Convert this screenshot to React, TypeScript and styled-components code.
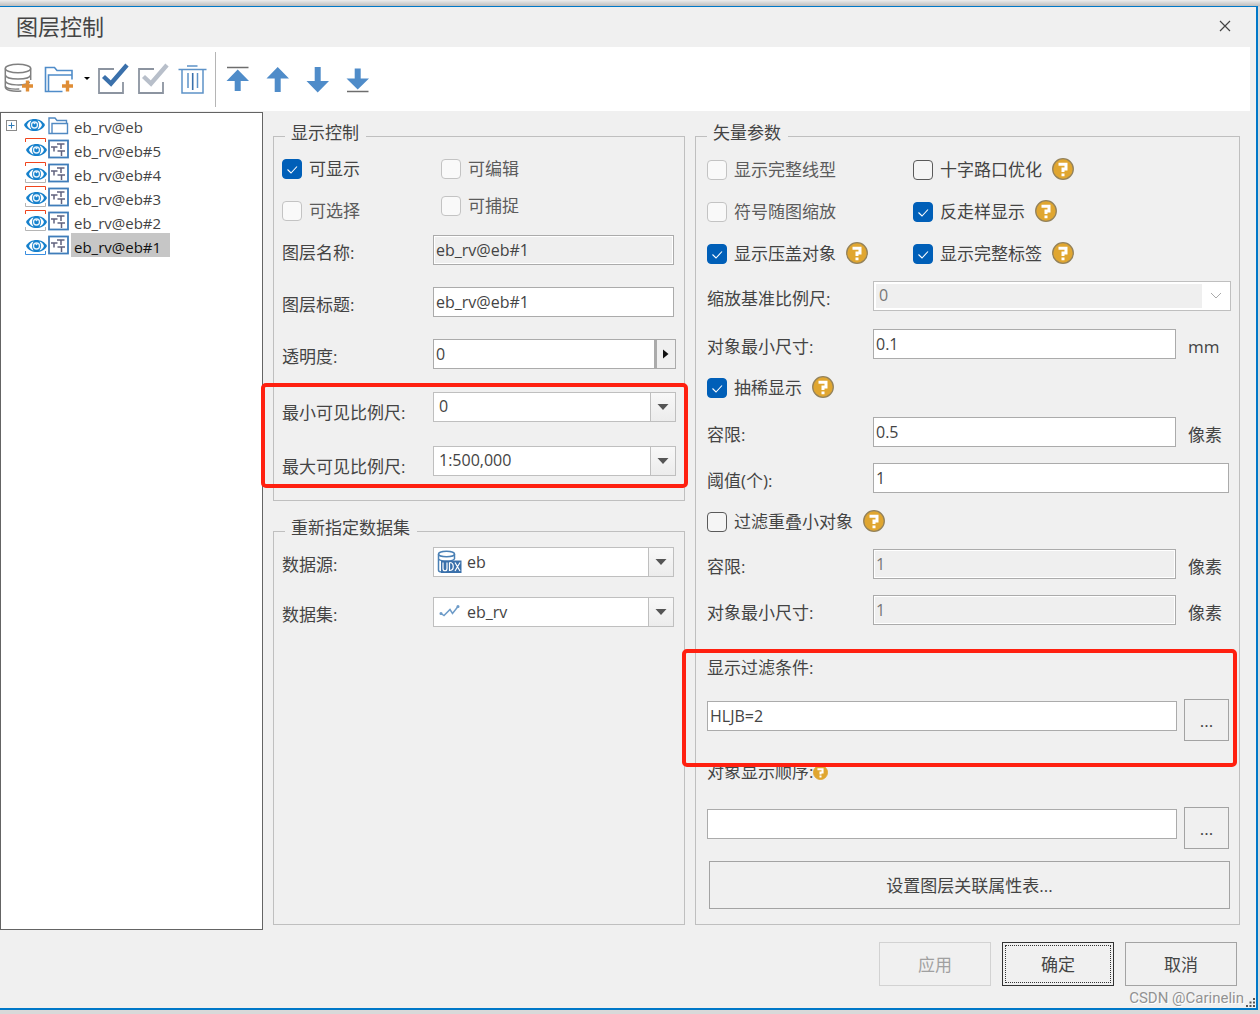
import React, { useId } from "react";
import styled, { createGlobalStyle, css } from "styled-components";

const line = "#bfbfbf";
const fieldLine = "#ababab";
const ink = "#444444";
const accent = "#0078c8";

const GlobalStyle = createGlobalStyle`
  * { box-sizing: border-box; }
  body {
    margin: 0;
    background: #d9d9d9;
    color: ${ink};
    font: 17px/22px "Open Sans", "Noto Sans CJK SC", sans-serif;
  }
  button, input, select { font: inherit; color: inherit; margin: 0; }
`;

/* ---------- window frame ---------- */

const Desktop = styled.div`
  display: flex;
  min-height: 100vh;
  padding: 6px 2px 4px 0;
  background: linear-gradient(#ededed, #bdbdbd 6px, #d9d9d9 7px);
`;

const Dialog = styled.main`
  display: flex;
  flex: 1;
  flex-direction: column;
  min-width: 0;
  border: solid ${accent};
  border-width: 1px 2px 2px 0;
  background: #f0f0f0;
`;

const TitleBar = styled.header`
  display: flex;
  align-items: center;
  justify-content: space-between;
  height: 40px;
  padding: 0 24px 2px 16px;
`;

const Title = styled.h1`
  margin: 0;
  font-size: 22px;
  font-weight: 400;
  line-height: 32px;
`;

const BareButton = styled.button`
  display: flex;
  align-items: center;
  justify-content: center;
  padding: 0;
  border: 0;
  background: none;
`;

const Toolbar = styled.div`
  display: flex;
  align-items: center;
  height: 64px;
  margin-right: 6px;
  background: #fff;
`;

const ToolButton = styled(BareButton)<{ $narrow?: boolean }>`
  width: ${(p) => (p.$narrow ? 13 : 40)}px;
  height: 40px;
`;

const Separator = styled.span`
  width: 1px;
  height: 55px;
  margin: 0 2px;
  background: #b5b5b5;
`;

const Body = styled.div`
  display: grid;
  flex: 1;
  grid-template-columns: 263px minmax(0, 412fr) minmax(0, 545fr);
  column-gap: 10px;
  padding: 1px 16px 0 0;
`;

const Column = styled.div`
  display: flex;
  flex-direction: column;
  gap: 15px;
  padding: 9px 0 5px;
`;

/* ---------- layer tree ---------- */

const Tree = styled.ul`
  margin: 0;
  padding: 0;
  border: 1px solid #646464;
  background: #fff;
  list-style: none;
  font-size: 15px;
`;

const TreeItem = styled.li`
  display: flex;
  align-items: center;
  height: 24px;
`;

const Indent = styled.span`
  width: 22px;
`;

const Expander = styled(BareButton)`
  width: 22px;
  height: 24px;
  padding-right: 2px;
`;

const TreeName = styled.span<{ $selected?: boolean }>`
  height: 24px;
  padding: 0 9px 0 3px;
  line-height: 28px;
  ${(p) => p.$selected && css`background: #c6c6c6; color: #111;`}
`;

/* ---------- groups and rows ---------- */

const Group = styled.fieldset<{ $grow?: boolean; $left: number }>`
  min-width: 0;
  margin: 0;
  padding: 0 8px 0 ${(p) => p.$left}px;
  border: 1px solid ${line};
  ${(p) => p.$grow && css`flex: 1;`}
`;

const Legend = styled.legend<{ $shift?: boolean }>`
  padding: 1px 7px 7px 6px;
  margin-left: ${(p) => (p.$shift ? 0 : 3)}px;
`;

const Stack = styled.div<{ $gap: number; $top?: number; $bottom?: number }>`
  position: relative;
  display: flex;
  flex-direction: column;
  gap: ${(p) => p.$gap}px;
  padding-top: ${(p) => p.$top ?? 0}px;
  padding-bottom: ${(p) => p.$bottom ?? 0}px;
`;

const Row = styled.div<{ $label?: number; $inset?: boolean; $space?: number }>`
  display: grid;
  grid-template-columns: ${(p) => p.$label ?? 151}px minmax(0, 1fr);
  grid-template-rows: 30px;
  margin-top: ${(p) => p.$space ?? 0}px;
  padding-right: ${(p) => (p.$inset ? 2 : 0)}px;
`;

const RowLabel = styled.label<{ $low?: boolean }>`
  padding-top: ${(p) => (p.$low ? 10 : 7)}px;
`;

const Inline = styled.div`
  display: flex;
`;

const Unit = styled.span`
  width: 53px;
  padding: 7px 0 0 12px;
`;

const CheckGrid = styled.div<{ $first: number }>`
  display: grid;
  grid-template-columns: ${(p) => p.$first}px minmax(0, 1fr);
  padding-top: 8px;
`;

/* ---------- controls ---------- */

const TextInput = styled.input`
  flex: 1;
  width: 100%;
  min-width: 0;
  height: 30px;
  padding: 0 2px;
  border: 1px solid ${fieldLine};
  background: #fff;
  font-size: 16px;

  &:read-only,
  &:disabled {
    background: #efefef;
    box-shadow: inset 0 0 0 1px #fff;
  }
  &:disabled { color: #777; }
`;

const SpinButton = styled(BareButton)`
  width: 21px;
  height: 30px;
  border: 1px solid ${fieldLine};
  border-left-width: 2px;
`;

const SelectBox = styled.div`
  position: relative;
`;

const Select = styled.select<{ $icon?: boolean }>`
  display: block;
  width: 100%;
  height: 30px;
  padding: ${(p) => (p.$icon ? "0 30px 0 33px" : "0 30px 2px 5px")};
  border: 1px solid ${line};
  border-radius: 0;
  background: #fff;
  font-size: 16px;
  appearance: none;

  &:disabled {
    background: #efefef;
    color: #777;
    opacity: 1;
    box-shadow: inset 0 0 0 2px #fff;
  }
`;

const SelectIcon = styled.span`
  position: absolute;
  top: 2px;
  left: 4px;
  display: flex;
  pointer-events: none;
`;

const SelectArrow = styled.span<{ $plain?: boolean }>`
  position: absolute;
  top: 1px;
  right: 1px;
  bottom: 1px;
  display: flex;
  width: ${(p) => (p.$plain ? 28 : 25)}px;
  align-items: center;
  justify-content: center;
  border-left: ${(p) => (p.$plain ? 0 : 1)}px solid ${line};
  background: ${(p) => (p.$plain ? "#fff" : "linear-gradient(#f8f8f8, #ececec)")};
  pointer-events: none;
`;

const CheckLabel = styled.label<{ $muted?: boolean }>`
  display: flex;
  align-items: center;
  height: 20px;
  gap: 7px;
  color: ${(p) => (p.$muted ? "#5c5c5c" : ink)};
`;

const CheckFrame = styled.span`
  position: relative;
  display: flex;
  svg {
    position: absolute;
    inset: 0;
    pointer-events: none;
  }
`;

const CheckInput = styled.input`
  width: 20px;
  height: 20px;
  border: 1px solid #5a5a5a;
  border-radius: 4px;
  background: #f5f5f5;
  appearance: none;

  &:disabled { border-color: #c3c3c3; background: #f9f9f9; }
  &:checked { border-color: #005fb8; background: #005fb8; }
  & + svg { visibility: hidden; }
  &:checked + svg { visibility: visible; }
`;

const CheckLine = styled.div`
  display: flex;
  align-items: center;
  height: 22px;
  gap: 10px;

  > svg { margin-bottom: 2px; }
`;

const SpacedLine = styled(CheckLine)`
  margin-top: 18px;
`;

const PushButton = styled.button<{ $kind?: "more" | "wide" }>`
  width: ${(p) => (p.$kind === "more" ? "45px" : p.$kind === "wide" ? "auto" : "112px")};
  height: ${(p) => (p.$kind === "more" ? 42 : p.$kind === "wide" ? 48 : 44)}px;
  padding: 2px 0 0;
  border: 1px solid #a3a3a3;
  background: #f0f0f0;

  &:disabled { border-color: #d2d2d2; color: #a0a0a0; }
`;

const DefaultButton = styled(PushButton)`
  border-color: #333;
  outline: 1px dotted #333;
  outline-offset: -4px;
`;

const Picker = styled.div`
  display: flex;
  gap: 7px;
  padding-right: 2px;

  ${TextInput} { margin-top: 2px; }
`;

const WideRow = styled.div`
  display: grid;
  padding: 12px 1px 14px 2px;
`;

const OrderLabel = styled.label`
  display: flex;
  align-items: center;
  height: 22px;
`;

const Highlight = styled.span<{ $edges: string }>`
  position: absolute;
  z-index: 1;
  inset: ${(p) => p.$edges};
  border: 4px solid #ff2010;
  border-radius: 5px;
  pointer-events: none;
`;

const Footer = styled.footer`
  display: flex;
  justify-content: flex-end;
  gap: 11px;
  padding: 12px 19px 0;
`;

const Credit = styled.div`
  display: flex;
  align-items: flex-end;
  justify-content: flex-end;
  height: 22px;
  gap: 2px;
  color: #929292;
  font: 15px/20px Roboto, "Liberation Sans", sans-serif;
  text-shadow: 1px 1px 0 #fff;
`;

/* ---------- drawings ---------- */

const Plus = () => <path d="M23.500 17.500v11M18 23h11" stroke="#df8d36" strokeWidth="3.400" />;

const ToolSvg = ({ children }: { children: React.ReactNode }) => (
  <svg width="32" height="32" viewBox="0 0 32 32" fill="none">{children}</svg>
);

const DatabaseAdd = () => (
  <ToolSvg>
    <g stroke="#808080" strokeWidth="1.500">
      <ellipse cx="14" cy="5.500" rx="12.700" ry="4.200" />
      <path d="M1.300 5.500v18.500c0 3 7 5 16 4M26.700 5.500v11.500M1.300 12c1 5.300 24.400 5.300 25.400 0M1.300 18c1 4.500 20 5.500 24.500 1M1.300 23c1 2 6 3.500 14 3" />
    </g>
    <Plus />
  </ToolSvg>
);

const FolderAdd = () => (
  <ToolSvg>
    <path d="M4.500 28.500h-3v-24h9l2.500 3h15v9M4.500 28.500v-16.500h23.500M4.500 28.500h14" stroke="#4f8cc9" strokeWidth="1.600" />
    <Plus />
  </ToolSvg>
);

const CheckTool = ({ color }: { color: string }) => (
  <ToolSvg>
    <path d="M17 6H2v24h24V19" stroke="#8c94a0" strokeWidth="1.800" />
    <path d="M6.500 13.500l7.500 7L30 2" stroke={color} strokeWidth="4.400" />
  </ToolSvg>
);

const TrashTool = () => (
  <ToolSvg>
    <path d="M1.500 6.500h28M10 3h10.500M5 7v23h21V7M11 10v15M20.500 10v15" stroke="#5d92c8" strokeWidth="1.500" />
    <path d="M15.700 10v17" stroke="#3a70ab" strokeWidth="1.600" />
  </ToolSvg>
);

const Arrow = ({ d, bar }: { d: string; bar?: number }) => (
  <ToolSvg>
    <path d={d} fill="#4f8cc9" />
    {bar !== undefined && <path d={`M5 ${bar}h21.500`} stroke="#6d6d6d" strokeWidth="1.500" />}
  </ToolSvg>
);

const Triangle = ({ right }: { right?: boolean }) =>
  right ? (
    <svg width="6" height="10" viewBox="0 0 6 10"><path d="M0 0.500v9l5.500-4.500z" fill="#111" /></svg>
  ) : (
    <svg width="12" height="6" viewBox="0 0 12 6"><path d="M0.500 0h11L6 6z" fill="#555" /></svg>
  );

type Bracket = { top?: string; bottom?: string };

const Eye = ({ top, bottom }: Bracket) => {
  const nested = Boolean(top || bottom);
  return (
    <svg width="25" height="24" viewBox="0 0 25 24" fill="none">
      {top && <path d="M2.500 5V1.500h20V5" stroke={top} />}
      {bottom && <path d="M2.500 18v3.500h20V18" stroke={bottom} />}
      <g transform={nested ? "translate(2 1)" : undefined}>
        <path d="M1 12c4-8 17-8 21 0c-4 8-17 8-21 0z" fill="#1580cc" />
        <path d="M4 12c1-2.500 2.500-4 4.500-4.500c-2 3-2 6 0 9c-2-.5-3.500-2-4.500-4.500zM19 12c-1-2.500-2.500-4-4.500-4.500c2 3 2 6 0 9c2-.5 3.500-2 4.500-4.500z" fill="#fff" />
        <circle cx="11.500" cy="12" r="3" stroke="#e6f2fb" strokeWidth="1.300" />
        <circle cx="11.500" cy="10.300" r="1" fill="#e6f2fb" />
      </g>
    </svg>
  );
};

const FolderIcon = () => (
  <svg width="23" height="24" viewBox="0 0 23 24" fill="none" stroke="#5089c2" strokeWidth="1.400">
    <path d="M4 20.500h-3v-15.500h6l2 2.500h9.500v3M4 20.500v-10h15.500v10z" />
  </svg>
);

const LabelLayerIcon = () => (
  <svg width="23" height="24" viewBox="0 0 23 24" fill="none">
    <rect x="1" y="3.500" width="19" height="17" stroke="#3f7dba" strokeWidth="1.800" />
    <path d="M3 10h6.500M6 10v4.500M9 7h7.500M13 7v5M9.500 14h7.500M13.500 14v5" stroke="#60627e" strokeWidth="1.500" />
  </svg>
);

const Help = ({ small }: { small?: boolean }) => (
  <svg width={small ? 15 : 22} height={small ? 15 : 22} viewBox="0 0 22 22" role="img" aria-label="?">
    <circle cx="11" cy="11" r="10.300" fill="#e0a630" stroke={small ? "#e0a630" : "#94825a"} strokeWidth="1.300" />
    <path d="M6.500 6.200h7.500v4.800h-3v3M11 15.500v2.800" fill="none" stroke="#fff" strokeWidth="3" />
  </svg>
);

const UdxIcon = () => (
  <svg width="26" height="26" viewBox="0 0 26 26" fill="none" stroke="#4a80b5" strokeWidth="1.500">
    <ellipse cx="9.500" cy="5" rx="8" ry="2.800" />
    <path d="M1.500 5v16c0 1 1 2 3 2M17.500 5v5M1.500 10c3 3 13 3 16 0" />
    <rect x="4" y="11.500" width="20.500" height="12.500" fill="#3a70ab" stroke="none" />
    <path d="M6 13.500v6c0 3 4 3 4 0v-6M12.500 13.500v8c5 0 5-8 0-8M18 13.500l5 8.500M23 13.500l-5 8.500" stroke="#fff" strokeWidth="1.200" />
  </svg>
);

const LineIcon = () => (
  <svg width="26" height="26" viewBox="0 0 26 26" fill="none" stroke="#6d9bc8" strokeWidth="1.500">
    <path d="M4 14.500l3 2 6-6 2.500 4 5.500-7" />
    <circle cx="4" cy="14.500" r="0.800" /><circle cx="21" cy="7.500" r="0.800" />
  </svg>
);

/* ---------- composed parts ---------- */

function Check({ text, checked, disabled }: { text: string; checked?: boolean; disabled?: boolean }) {
  return (
    <CheckLabel $muted={disabled}>
      <CheckFrame>
        <CheckInput type="checkbox" defaultChecked={checked} disabled={disabled} />
        <svg width="20" height="20" viewBox="0 0 20 20" fill="none">
          <path d="M5.500 10.500l3.500 3.500 6-6.500" stroke="#fff" strokeWidth="1.100" />
        </svg>
      </CheckFrame>
      {text}
    </CheckLabel>
  );
}

function Drop(props: { id: string; value: string; icon?: React.ReactNode; disabled?: boolean }) {
  return (
    <SelectBox>
      <Select id={props.id} $icon={Boolean(props.icon)} disabled={props.disabled}>
        <option>{props.value}</option>
      </Select>
      {props.icon && <SelectIcon>{props.icon}</SelectIcon>}
      <SelectArrow $plain={props.disabled}>
        {props.disabled ? (
          <svg width="12" height="8" viewBox="0 0 12 8" fill="none"><path d="M1 1l5 5 5-5" stroke="#aaa" /></svg>
        ) : (
          <Triangle />
        )}
      </SelectArrow>
    </SelectBox>
  );
}

type FieldProps = { label: string; value: string; readOnly?: boolean; disabled?: boolean; unit?: string; space?: number; wide?: boolean };

function TextRow({ label, value, readOnly, disabled, unit, space, wide }: FieldProps) {
  const id = useId();
  return (
    <Row $label={wide ? 166 : undefined} $inset $space={space}>
      <RowLabel htmlFor={id}>{label}</RowLabel>
      <Inline>
        <TextInput id={id} defaultValue={value} readOnly={readOnly} disabled={disabled} />
        {unit && <Unit>{unit}</Unit>}
      </Inline>
    </Row>
  );
}

function DropRow(props: { label: string; value: string; icon?: React.ReactNode; inset?: boolean; low?: boolean }) {
  const id = useId();
  return (
    <Row $inset={props.inset}>
      <RowLabel htmlFor={id} $low={props.low}>{props.label}</RowLabel>
      <Drop id={id} value={props.value} icon={props.icon} />
    </Row>
  );
}

const red = "#f0441c";
const layers: { name: string; bracket: Bracket }[] = [
  { name: "eb_rv@eb#5", bracket: { top: red } },
  { name: "eb_rv@eb#4", bracket: { top: red, bottom: "#b5b5b5" } },
  { name: "eb_rv@eb#3", bracket: { top: red, bottom: "#b5b5b5" } },
  { name: "eb_rv@eb#2", bracket: { top: red, bottom: "#b5b5b5" } },
  { name: "eb_rv@eb#1", bracket: { bottom: "#3a8ee0" } },
];

export default function App() {
  return (
    <>
      <GlobalStyle />
      <Desktop>
        <Dialog>
          <TitleBar>
            <Title>图层控制</Title>
            <BareButton aria-label="关闭">
              <svg width="14" height="14" viewBox="0 0 14 14"><path d="M2 2l10 10M12 2L2 12" stroke="#444" strokeWidth="1.200" /></svg>
            </BareButton>
          </TitleBar>

          <Toolbar>
            <ToolButton aria-label="添加数据集"><DatabaseAdd /></ToolButton>
            <ToolButton aria-label="新建分组"><FolderAdd /></ToolButton>
            <ToolButton $narrow aria-label="更多">
              <svg width="6" height="4" viewBox="0 0 6 4"><path d="M0 0h6L3 3z" fill="#000" /></svg>
            </ToolButton>
            <ToolButton aria-label="全选"><CheckTool color="#3a70ab" /></ToolButton>
            <ToolButton aria-label="反选"><CheckTool color="#b8bfca" /></ToolButton>
            <ToolButton aria-label="删除"><TrashTool /></ToolButton>
            <Separator />
            <ToolButton aria-label="置顶"><Arrow bar={4.5} d="M15.700 6.500L27 18H18.700v10h-6V18H4.500z" /></ToolButton>
            <ToolButton aria-label="上移"><Arrow d="M15.700 4L27 15.500H18.700V29h-6V15.500H4.500z" /></ToolButton>
            <ToolButton aria-label="下移"><Arrow d="M15.700 29.500L27 18H18.700V4h-6v14H4.500z" /></ToolButton>
            <ToolButton aria-label="置底"><Arrow bar={28.5} d="M15.700 26.500L27 15.500H18.700V5.500h-6v10H4.500z" /></ToolButton>
          </Toolbar>

          <Body>
            <Tree>
              <TreeItem>
                <Expander aria-label="展开">
                  <svg width="11" height="11" viewBox="0 0 11 11" fill="none">
                    <rect x="0.500" y="0.500" width="10" height="10" stroke="#8a8a8a" />
                    <path d="M2.500 5.500h6M5.500 2.500v6" stroke="#2f7bb8" />
                  </svg>
                </Expander>
                <Eye />
                <FolderIcon />
                <TreeName>eb_rv@eb</TreeName>
              </TreeItem>
              {layers.map((layer, i) => (
                <TreeItem key={layer.name}>
                  <Indent />
                  <Eye {...layer.bracket} />
                  <LabelLayerIcon />
                  <TreeName $selected={i === layers.length - 1}>{layer.name}</TreeName>
                </TreeItem>
              ))}
            </Tree>

            <Column>
              <Group $left={8}>
                <Legend>显示控制</Legend>
                <CheckGrid $first={159}>
                  <Stack $gap={22}>
                    <Check text="可显示" checked />
                    <Check text="可选择" disabled />
                  </Stack>
                  <Stack $gap={17}>
                    <Check text="可编辑" disabled />
                    <Check text="可捕捉" disabled />
                  </Stack>
                </CheckGrid>
                <Stack $gap={22} $top={14} $bottom={23}>
                  <TextRow label="图层名称:" value="eb_rv@eb#1" readOnly />
                  <TextRow label="图层标题:" value="eb_rv@eb#1" />
                  <Row>
                    <RowLabel htmlFor="opacity">透明度:</RowLabel>
                    <Inline>
                      <TextInput id="opacity" defaultValue="0" />
                      <SpinButton aria-label="透明度"><Triangle right /></SpinButton>
                    </Inline>
                  </Row>
                </Stack>
                <Stack $gap={24}>
                  <DropRow label="最小可见比例尺:" value="0" low />
                  <DropRow label="最大可见比例尺:" value="1:500,000" low />
                  <Highlight $edges="-9px -12px -12px -21px" />
                </Stack>
                <Stack $gap={0} $top={24} />
              </Group>

              <Group $left={8} $grow>
                <Legend>重新指定数据集</Legend>
                <Stack $gap={20} $top={1}>
                  <DropRow label="数据源:" value="eb" icon={<UdxIcon />} inset />
                  <DropRow label="数据集:" value="eb_rv" icon={<LineIcon />} inset />
                </Stack>
              </Group>
            </Column>

            <Column>
              <Group $left={11} $grow>
                <Legend $shift>矢量参数</Legend>
                <CheckGrid $first={206}>
                  <Stack $gap={20}>
                    <CheckLine><Check text="显示完整线型" disabled /></CheckLine>
                    <CheckLine><Check text="符号随图缩放" disabled /></CheckLine>
                    <CheckLine><Check text="显示压盖对象" checked /><Help /></CheckLine>
                  </Stack>
                  <Stack $gap={20}>
                    <CheckLine><Check text="十字路口优化" /><Help /></CheckLine>
                    <CheckLine><Check text="反走样显示" checked /><Help /></CheckLine>
                    <CheckLine><Check text="显示完整标签" checked /><Help /></CheckLine>
                  </Stack>
                </CheckGrid>
                <Row $label={166} $space={16}>
                  <RowLabel htmlFor="base-scale">缩放基准比例尺:</RowLabel>
                  <Drop id="base-scale" value="0" disabled />
                </Row>
                <TextRow wide space={18} label="对象最小尺寸:" value="0.1" unit="mm" />
                <SpacedLine><Check text="抽稀显示" checked /><Help /></SpacedLine>
                <TextRow wide space={18} label="容限:" value="0.5" unit="像素" />
                <TextRow wide space={16} label="阈值(个):" value="1" />
                <SpacedLine><Check text="过滤重叠小对象" /><Help /></SpacedLine>
                <TextRow wide space={16} label="容限:" value="1" unit="像素" disabled />
                <TextRow wide space={16} label="对象最小尺寸:" value="1" unit="像素" disabled />
                <Stack $gap={0} $top={32} />
                <Stack $gap={20}>
                  <OrderLabel htmlFor="filter">显示过滤条件:</OrderLabel>
                  <Picker>
                    <TextInput id="filter" defaultValue="HLJB=2" />
                    <PushButton $kind="more">...</PushButton>
                  </Picker>
                  <Highlight $edges="-8px -6px -26px -25px" />
                </Stack>
                <Stack $gap={24} $top={20}>
                  <OrderLabel htmlFor="order">对象显示顺序:<Help small /></OrderLabel>
                  <Picker>
                    <TextInput id="order" />
                    <PushButton $kind="more">...</PushButton>
                  </Picker>
                </Stack>
                <WideRow>
                  <PushButton $kind="wide">设置图层关联属性表...</PushButton>
                </WideRow>
              </Group>
            </Column>
          </Body>

          <Footer>
            <PushButton disabled>应用</PushButton>
            <DefaultButton>确定</DefaultButton>
            <PushButton>取消</PushButton>
          </Footer>
          <Credit>
            CSDN @Carinelin
            <svg width="10" height="10" viewBox="0 0 10 10" fill="#555">
              <path d="M7 0h2v2h-2zM7 3.500h2v2h-2zM3.500 3.500h2v2h-2zM7 7h2v2h-2zM3.500 7h2v2h-2zM0 7h2v2h-2z" />
            </svg>
          </Credit>
        </Dialog>
      </Desktop>
    </>
  );
}
